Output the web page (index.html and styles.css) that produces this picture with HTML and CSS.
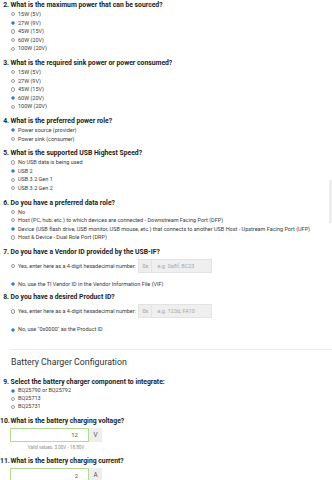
FILE: index.html
```html
<!DOCTYPE html>
<html>
<head>
<meta charset="utf-8">
<link rel="stylesheet" href="styles.css">
</head>
<body>
<div class="page">
  <section class="q">
    <div class="qh"><span class="num">2.</span>What is the maximum power that can be sourced?</div>
    <label class="opt"><input type="radio" name="q2"><span>15W (5V)</span></label>
    <label class="opt"><input type="radio" name="q2" checked><span>27W (9V)</span></label>
    <label class="opt"><input type="radio" name="q2"><span>45W (15V)</span></label>
    <label class="opt"><input type="radio" name="q2"><span>60W (20V)</span></label>
    <label class="opt"><input type="radio" name="q2"><span>100W (20V)</span></label>
  </section>
  <section class="q">
    <div class="qh"><span class="num">3.</span>What is the required sink power or power consumed?</div>
    <label class="opt"><input type="radio" name="q3"><span>15W (5V)</span></label>
    <label class="opt"><input type="radio" name="q3"><span>27W (9V)</span></label>
    <label class="opt"><input type="radio" name="q3"><span>45W (15V)</span></label>
    <label class="opt"><input type="radio" name="q3" checked><span>60W (20V)</span></label>
    <label class="opt"><input type="radio" name="q3"><span>100W (20V)</span></label>
  </section>
  <section class="q">
    <div class="qh"><span class="num">4.</span>What is the preferred power role?</div>
    <label class="opt"><input type="radio" name="q4" checked><span>Power source (provider)</span></label>
    <label class="opt"><input type="radio" name="q4"><span>Power sink (consumer)</span></label>
  </section>
  <section class="q">
    <div class="qh"><span class="num">5.</span>What is the supported USB Highest Speed?</div>
    <label class="opt"><input type="radio" name="q5"><span>No USB data is being used</span></label>
    <label class="opt"><input type="radio" name="q5" checked><span>USB 2</span></label>
    <label class="opt"><input type="radio" name="q5"><span>USB 3.2 Gen 1</span></label>
    <label class="opt"><input type="radio" name="q5"><span>USB 3.2 Gen 2</span></label>
  </section>
  <section class="q">
    <div class="qh"><span class="num">6.</span>Do you have a preferred data role?</div>
    <label class="opt"><input type="radio" name="q6"><span>No</span></label>
    <label class="opt"><input type="radio" name="q6"><span>Host (PC, hub, etc.) to which devices are connected - Downstream Facing Port (DFP)</span></label>
    <label class="opt"><input type="radio" name="q6" checked><span>Device (USB flash drive, USB monitor, USB mouse, etc.) that connects to another USB Host - Upstream Facing Port (UFP)</span></label>
    <label class="opt"><input type="radio" name="q6"><span>Host &amp; Device - Dual Role Port (DRP)</span></label>
  </section>
  <section class="q q-id">
    <div class="qh"><span class="num">7.</span>Do you have a Vendor ID provided by the USB-IF?</div>
    <label class="opt opt-input"><input type="radio" name="q7"><span>Yes, enter here as a 4-digit hexadecimal number:</span>
      <span class="hexgroup"><span class="addon">0x</span><input class="hexin" type="text" placeholder="e.g. 0a8f, BC23" disabled></span>
    </label>
    <label class="opt opt-after"><input type="radio" name="q7" checked><span>No, use the TI Vendor ID in the Vendor Information File (VIF)</span></label>
  </section>
  <section class="q q-id">
    <div class="qh"><span class="num">8.</span>Do you have a desired Product ID?</div>
    <label class="opt opt-input"><input type="radio" name="q8"><span>Yes, enter here as a 4-digit hexadecimal number:</span>
      <span class="hexgroup"><span class="addon">0x</span><input class="hexin" type="text" placeholder="e.g. 123d, FA10" disabled></span>
    </label>
    <label class="opt opt-after"><input type="radio" name="q8" checked><span>No, use "0x0000" as the Product ID</span></label>
  </section>

  <hr class="divider">
  <h2 class="section-title">Battery Charger Configuration</h2>

  <section class="q q-tight">
    <div class="qh"><span class="num">9.</span>Select the battery charger component to integrate:</div>
    <label class="opt"><input type="radio" name="q9" checked><span>BQ25790 or BQ25792</span></label>
    <label class="opt"><input type="radio" name="q9"><span>BQ25713</span></label>
    <label class="opt"><input type="radio" name="q9"><span>BQ25731</span></label>
  </section>
  <section class="q q-num">
    <div class="qh"><span class="num">10.</span>What is the battery charging voltage?</div>
    <div class="numgroup"><input class="numin" type="text" value="12"><span class="unit">V</span></div>
    <div class="hint">Valid values: 3.00V - 18.80V</div>
  </section>
  <section class="q q-num">
    <div class="qh"><span class="num">11.</span>What is the battery charging current?</div>
    <div class="numgroup"><input class="numin" type="text" value="2"><span class="unit">A</span></div>
  </section>
</div>
<div class="scroll-hint"></div>
</body>
</html>
```
FILE: styles.css
```css
html, body {
  margin: 0;
  padding: 0;
  background: #ffffff;
}
body {
  font-family: Roboto, "Liberation Sans", sans-serif;
  color: #333333;
  width: 332px;
  height: 480px;
  overflow: hidden;
  position: relative;
}
.page {
  display: flex;
  flex-direction: column;
}
.q {
  display: flex;
  flex-direction: column;
  margin-bottom: 5px;
}
.qh {
  font-size: 6.8px;
  font-weight: 700;
  line-height: 10px;
  height: 10px;
  color: #222222;
  white-space: nowrap;
  display: flex;
}
.num {
  display: inline-block;
  width: 9px;
  text-align: right;
  margin-right: 1.6px;
}
.opt {
  display: flex;
  align-items: center;
  height: 8.6px;
  font-size: 5.5px;
  line-height: 8.6px;
  color: #3a3a3a;
  padding-left: 11px;
  white-space: nowrap;
}
.opt input[type="radio"] {
  -webkit-appearance: none;
  appearance: none;
  width: 4.2px;
  height: 4.2px;
  margin: 0 2.8px 0 0;
  border: 0.5px solid #9a9a9a;
  border-radius: 50%;
  background: #ffffff;
  box-sizing: border-box;
  flex: none;
}
.opt input[type="radio"]:checked {
  border: 0.6px solid #6f9ff0;
  background: radial-gradient(circle, #1f63d9 0 55%, #5d93ee 70%);
}
.q-id .opt-input {
  height: 14px;
  margin-top: 2px;
}
.q-id .opt-after {
  margin-top: 7px;
}
.q-id {
  margin-bottom: 4px;
}
.hexgroup {
  display: flex;
  margin-left: 2.5px;
  height: 14px;
}
.addon {
  width: 14px;
  height: 14px;
  background: #eeeeee;
  border: 0.5px solid #e3e3e3;
  box-sizing: border-box;
  color: #9a9a9a;
  font-size: 5.5px;
  line-height: 13px;
  text-align: center;
}
.hexin {
  width: 60px;
  height: 14px;
  margin: 0;
  padding: 0 0 0 5px;
  box-sizing: border-box;
  border: 0.5px solid #e3e3e3;
  border-left: none;
  background: #efefef;
  font-family: Roboto, "Liberation Sans", sans-serif;
  font-size: 5.5px;
  color: #999999;
  outline: none;
}
.hexin::placeholder {
  color: #a8a8a8;
}
.divider {
  border: none;
  border-top: 0.6px solid #ececec;
  margin: 11px 0 0 10px;
  height: 0;
}
.section-title {
  font-size: 8.8px;
  font-weight: 400;
  line-height: 12px;
  margin: 6px 0 9px 11px;
  color: #333333;
}
.q-tight .opt {
  height: 7.9px;
  line-height: 7.9px;
}
.q-num {
  margin-bottom: 5px;
}
.numgroup {
  display: flex;
  margin: 2px 0 0 10px;
  height: 14.5px;
}
.numin {
  width: 79px;
  height: 14.5px;
  margin: 0;
  box-sizing: border-box;
  border: 1px solid #b2dc94;
  background: #ffffff;
  text-align: right;
  padding: 0 10px 0 0;
  font-family: Roboto, "Liberation Sans", sans-serif;
  font-size: 6px;
  color: #555555;
  outline: none;
}
.unit {
  width: 13px;
  height: 14.5px;
  background: #eeeeee;
  color: #555555;
  font-size: 6.4px;
  line-height: 14.5px;
  text-align: center;
}
.hint {
  width: 92px;
  margin: 3px 0 0 10px;
  font-size: 4.6px;
  line-height: 6px;
  text-align: center;
  color: #8c8c8c;
}
.scroll-hint {
  position: absolute;
  right: 0;
  top: 180px;
  width: 3px;
  height: 43px;
  background: #eeeeee;
}
```
